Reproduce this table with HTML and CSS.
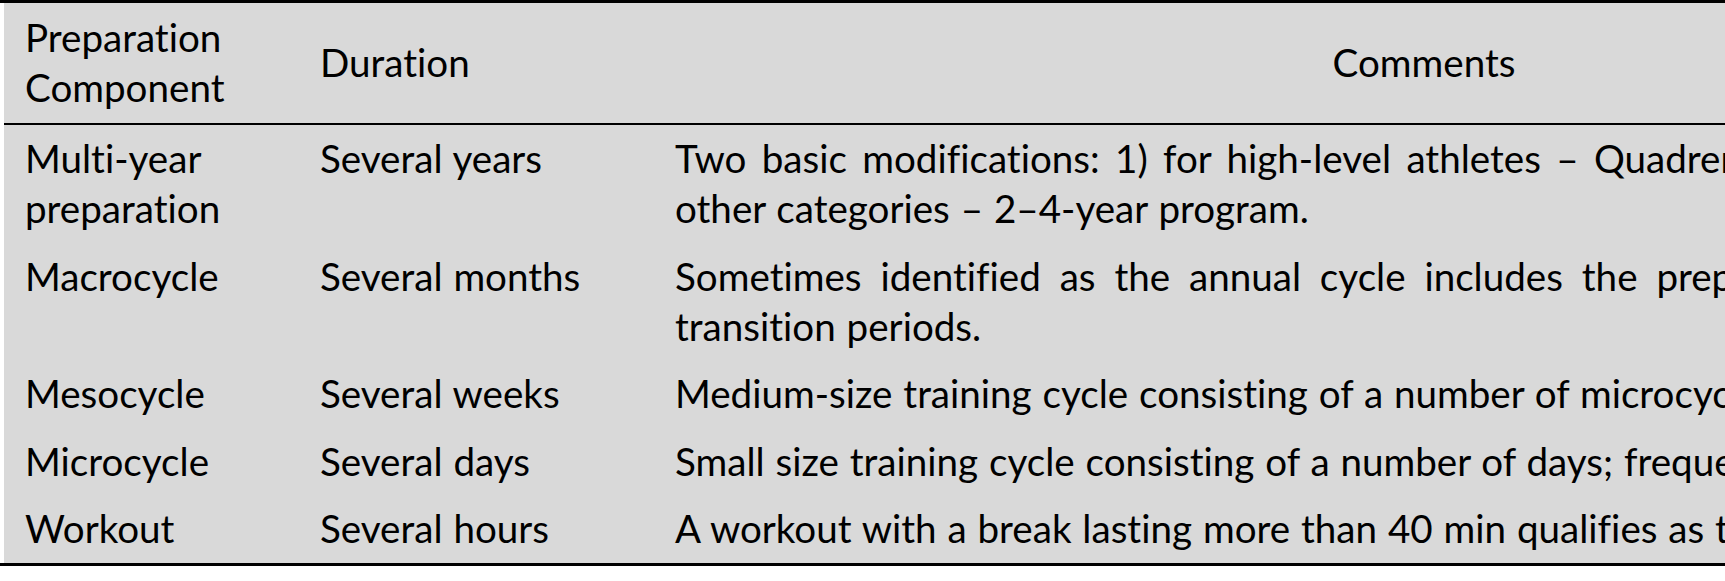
FILE: index.html
```html
<!DOCTYPE html>
<html lang="en">
<head>
<meta charset="utf-8">
<title>Preparation components</title>
<link rel="stylesheet" href="styles.css">
</head>
<body>
<div class="frame">
  <table class="periods">
    <colgroup>
      <col class="c-comp">
      <col class="c-dur">
      <col class="c-cmt">
    </colgroup>
    <thead>
      <tr>
        <th class="left">Preparation<br>Component</th>
        <th class="left">Duration</th>
        <th class="center">Comments</th>
      </tr>
    </thead>
    <tbody>
      <tr>
        <td>Multi-year<br>preparation</td>
        <td>Several years</td>
        <td><span class="ln just">Two basic modifications: 1) for high-level athletes – Quadrennial Olympic cycle; 2) for</span><span class="ln">other categories – 2–4-year program.</span></td>
      </tr>
      <tr>
        <td>Macrocycle</td>
        <td>Several months</td>
        <td><span class="ln just2">Sometimes identified as the annual cycle includes the preparatory, competition and</span><span class="ln">transition periods.</span></td>
      </tr>
      <tr>
        <td>Mesocycle</td>
        <td>Several weeks</td>
        <td><span class="ln">Medium-size training cycle consisting of a number of microcycles</span></td>
      </tr>
      <tr>
        <td>Microcycle</td>
        <td>Several days</td>
        <td><span class="ln">Small size training cycle consisting of a number of days; frequently one week</span></td>
      </tr>
      <tr>
        <td>Workout</td>
        <td>Several hours</td>
        <td><span class="ln">A workout with a break lasting more than 40 min qualifies as two workouts</span></td>
      </tr>
    </tbody>
  </table>
</div>
</body>
</html>
```
FILE: styles.css
```css
html, body {
  margin: 0;
  padding: 0;
  overflow: hidden;
  background: #ffffff;
}

.frame {
  width: max-content;
  border-top: 3px solid #000;
  border-bottom: 3px solid #000;
  padding-left: 4px;
}

.periods {
  border-collapse: separate;
  border-spacing: 0;
  table-layout: fixed;
  width: 2190px;
  background: #d9d9d9;
  color: #000;
  font-family: Lato, "Liberation Sans", sans-serif;
  font-size: 38.6px;
  line-height: 50px;
  word-spacing: 1px;
  font-variant-ligatures: none;
}

.c-comp { width: 295px; }
.c-dur { width: 355px; }
.c-cmt { width: 1540px; }

.periods th,
.periods td {
  box-sizing: border-box;
  padding: 8px 21px 9.6px 21px;
  font-weight: normal;
  vertical-align: top;
  text-align: left;
}

.periods th {
  padding-top: 9px;
  padding-bottom: 11px;
  vertical-align: middle;
  border-bottom: 2px solid #000;
}

.periods th.center { text-align: center; }

.ln {
  display: block;
  white-space: nowrap;
}

.just { word-spacing: 5.5px; }
.just2 { word-spacing: 9px; }
```
